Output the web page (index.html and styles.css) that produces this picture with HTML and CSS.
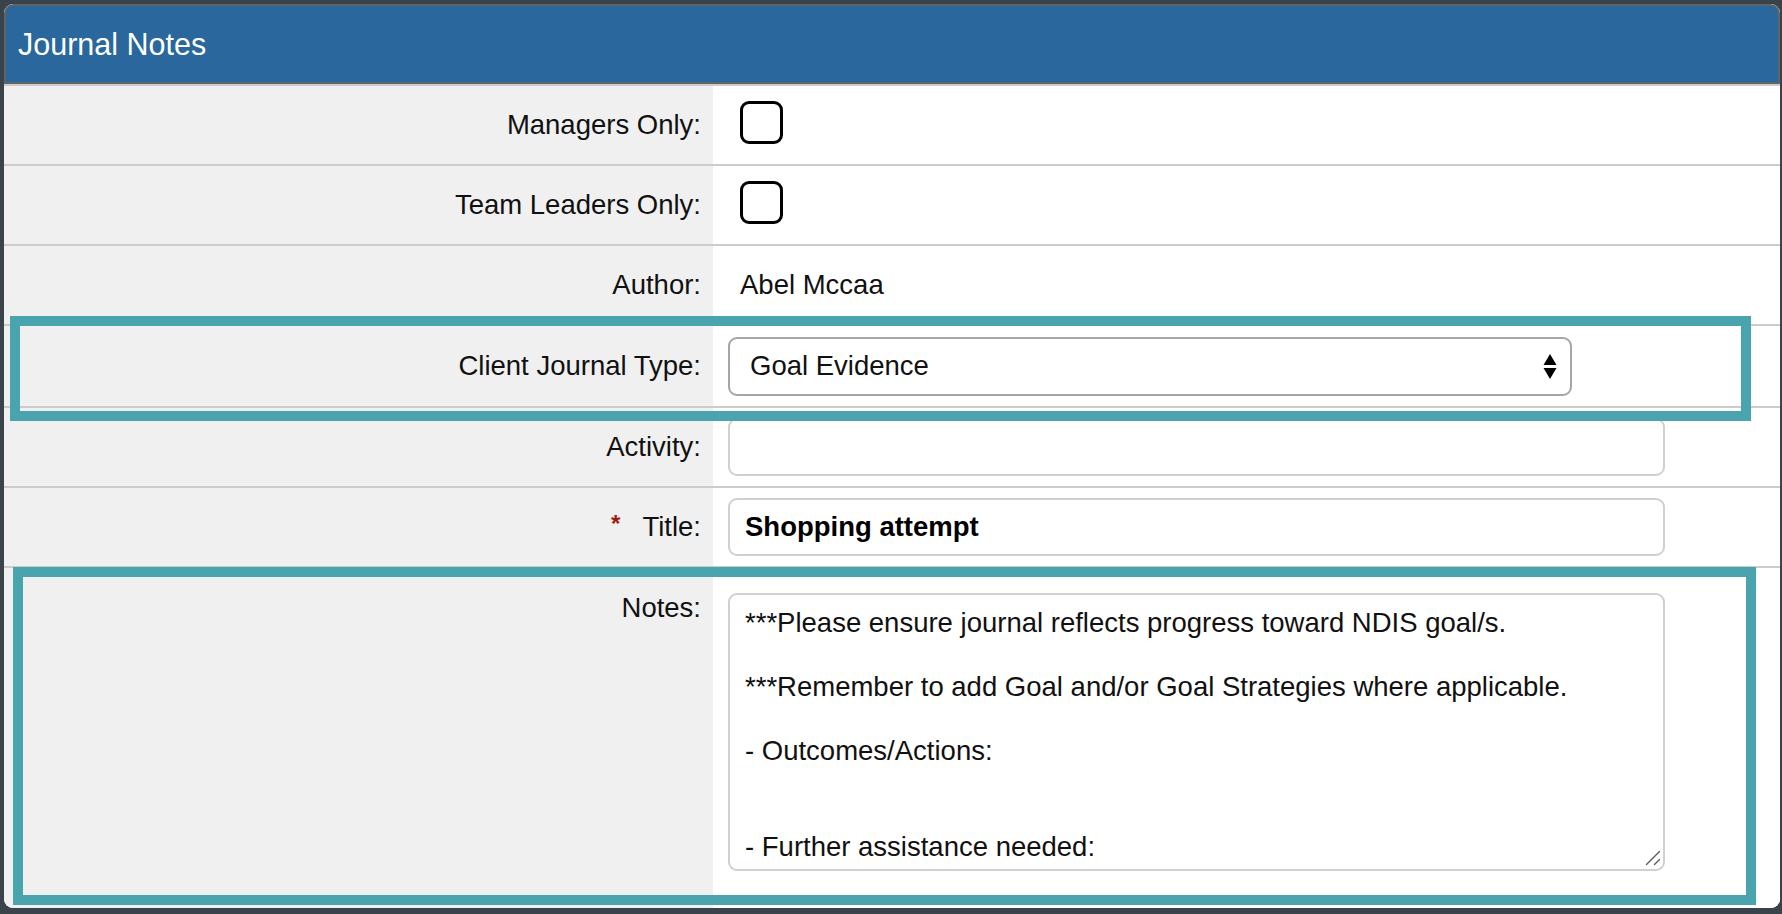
FILE: index.html
```html
<!DOCTYPE html>
<html lang="en">
<head>
<meta charset="utf-8">
<title>Journal Notes</title>
<link rel="stylesheet" href="styles.css">
</head>
<body>
<div class="panel">
  <div class="panel-header">Journal Notes</div>
  <div class="form">
    <div class="row">
      <div class="label">Managers Only:</div>
      <div class="value"><span class="checkbox"></span></div>
    </div>
    <div class="row">
      <div class="label">Team Leaders Only:</div>
      <div class="value"><span class="checkbox"></span></div>
    </div>
    <div class="row">
      <div class="label">Author:</div>
      <div class="value"><span class="plain">Abel Mccaa</span></div>
    </div>
    <div class="row row-tall">
      <div class="label">Client Journal Type:</div>
      <div class="value">
        <div class="select">
          <span class="select-text">Goal Evidence</span>
          <svg class="select-arrows" width="14" height="25" viewBox="0 0 14 25"><path d="M7 0 L13.5 11 L0.5 11 Z M0.5 14 L13.5 14 L7 25 Z" fill="#000"/></svg>
        </div>
      </div>
    </div>
    <div class="row">
      <div class="label">Activity:</div>
      <div class="value"><div class="input"></div></div>
    </div>
    <div class="row">
      <div class="label"><span class="req">*</span>Title:</div>
      <div class="value"><div class="input input-bold">Shopping attempt</div></div>
    </div>
    <div class="row row-notes">
      <div class="label label-top">Notes:</div>
      <div class="value value-top">
        <div class="textarea">
          <div class="ta-line">***Please ensure journal reflects progress toward NDIS goal/s.</div>
          <div class="ta-line">&nbsp;</div>
          <div class="ta-line">***Remember to add Goal and/or Goal Strategies where applicable.</div>
          <div class="ta-line">&nbsp;</div>
          <div class="ta-line">- Outcomes/Actions:</div>
          <div class="ta-line">&nbsp;</div>
          <div class="ta-line">&nbsp;</div>
          <div class="ta-line">- Further assistance needed:</div>
          <svg class="grip" width="16" height="16" viewBox="0 0 16 16"><path d="M1.5 14.5 L14.5 1.5 M9.5 14.5 L14.5 9.5" stroke="#5a5a5a" stroke-width="1.4" stroke-linecap="round"/></svg>
        </div>
      </div>
    </div>
  </div>
  <div class="highlight highlight-type"></div>
  <div class="highlight highlight-notes"></div>
</div>
</body>
</html>
```

FILE: styles.css
```css
html, body {
  margin: 0;
  padding: 0;
  background: #3a424a;
  height: 914px;
  overflow: hidden;
}

body {
  font-family: "Liberation Sans", Arial, Helvetica, sans-serif;
  color: #111;
}

.panel {
  position: relative;
  margin: 4px 2px 0 4px;
  height: 904px;
  background: #ffffff;
  border-radius: 9px;
  overflow: hidden;
  display: flex;
  flex-direction: column;
}

.panel-header {
  height: 76px;
  background: #29679c;
  border: 2px solid #5f6468;
  border-radius: 9px 9px 0 0;
  color: #ffffff;
  font-size: 30.5px;
  line-height: 76px;
  padding-left: 12px;
  flex: none;
}

.form {
  flex: 1;
  display: flex;
  flex-direction: column;
}

.row {
  display: grid;
  grid-template-columns: 709px 1fr;
  height: 78px;
  border-top: 2px solid #cccccc;
  flex: none;
}

.row-tall {
  height: 80px;
}

.row-notes {
  flex: 1;
  height: auto;
}

.label {
  background: #f0f0f0;
  display: flex;
  align-items: center;
  justify-content: flex-end;
  padding-right: 12px;
  font-size: 27.5px;
  color: #111;
}

.label-top {
  align-items: flex-start;
  padding-top: 24px;
  line-height: 32px;
}

.req {
  color: #9c1c0c;
  font-weight: bold;
  font-size: 24px;
  margin-right: 22px;
  position: relative;
  top: -3px;
}

.value {
  background: #ffffff;
  display: flex;
  align-items: center;
  padding-left: 15px;
}

.value-top {
  align-items: flex-start;
  padding-top: 25px;
}

.checkbox {
  display: block;
  width: 43px;
  height: 43px;
  box-sizing: border-box;
  border: 3.5px solid #000;
  border-radius: 9px;
  margin-left: 12px;
  margin-bottom: 6px;
  background: #fff;
}

.plain {
  font-size: 27.5px;
  margin-left: 12px;
  color: #111;
}

.select {
  width: 844px;
  height: 59px;
  box-sizing: border-box;
  border: 2px solid #a6a6a6;
  border-radius: 9px;
  display: flex;
  align-items: center;
  justify-content: space-between;
  padding: 0 13px 0 20px;
  font-size: 27.5px;
  color: #111;
  background: #fff;
}

.select-arrows {
  display: block;
  margin-top: 1px;
}

.input {
  width: 937px;
  height: 58px;
  box-sizing: border-box;
  border: 2px solid #d0d0d0;
  border-radius: 9px;
  display: flex;
  align-items: center;
  padding-left: 15px;
  font-size: 27.5px;
  color: #000;
  background: #fff;
}

.input-bold {
  font-weight: bold;
}

.textarea {
  position: relative;
  width: 937px;
  height: 278px;
  box-sizing: border-box;
  border: 2px solid #d0d0d0;
  border-radius: 9px;
  padding: 12px 15px 0 15px;
  font-size: 27.5px;
  line-height: 32px;
  color: #111;
  background: #fff;
  overflow: hidden;
}

.ta-line {
  white-space: pre;
}

.grip {
  position: absolute;
  right: 2px;
  bottom: 3px;
}

.highlight {
  position: absolute;
  box-sizing: border-box;
  border: 10px solid #4aa4ae;
  pointer-events: none;
}

.highlight-type {
  left: 6px;
  top: 312px;
  width: 1741px;
  height: 105px;
}

.highlight-notes {
  left: 9px;
  top: 563px;
  width: 1743px;
  height: 338px;
}
```
